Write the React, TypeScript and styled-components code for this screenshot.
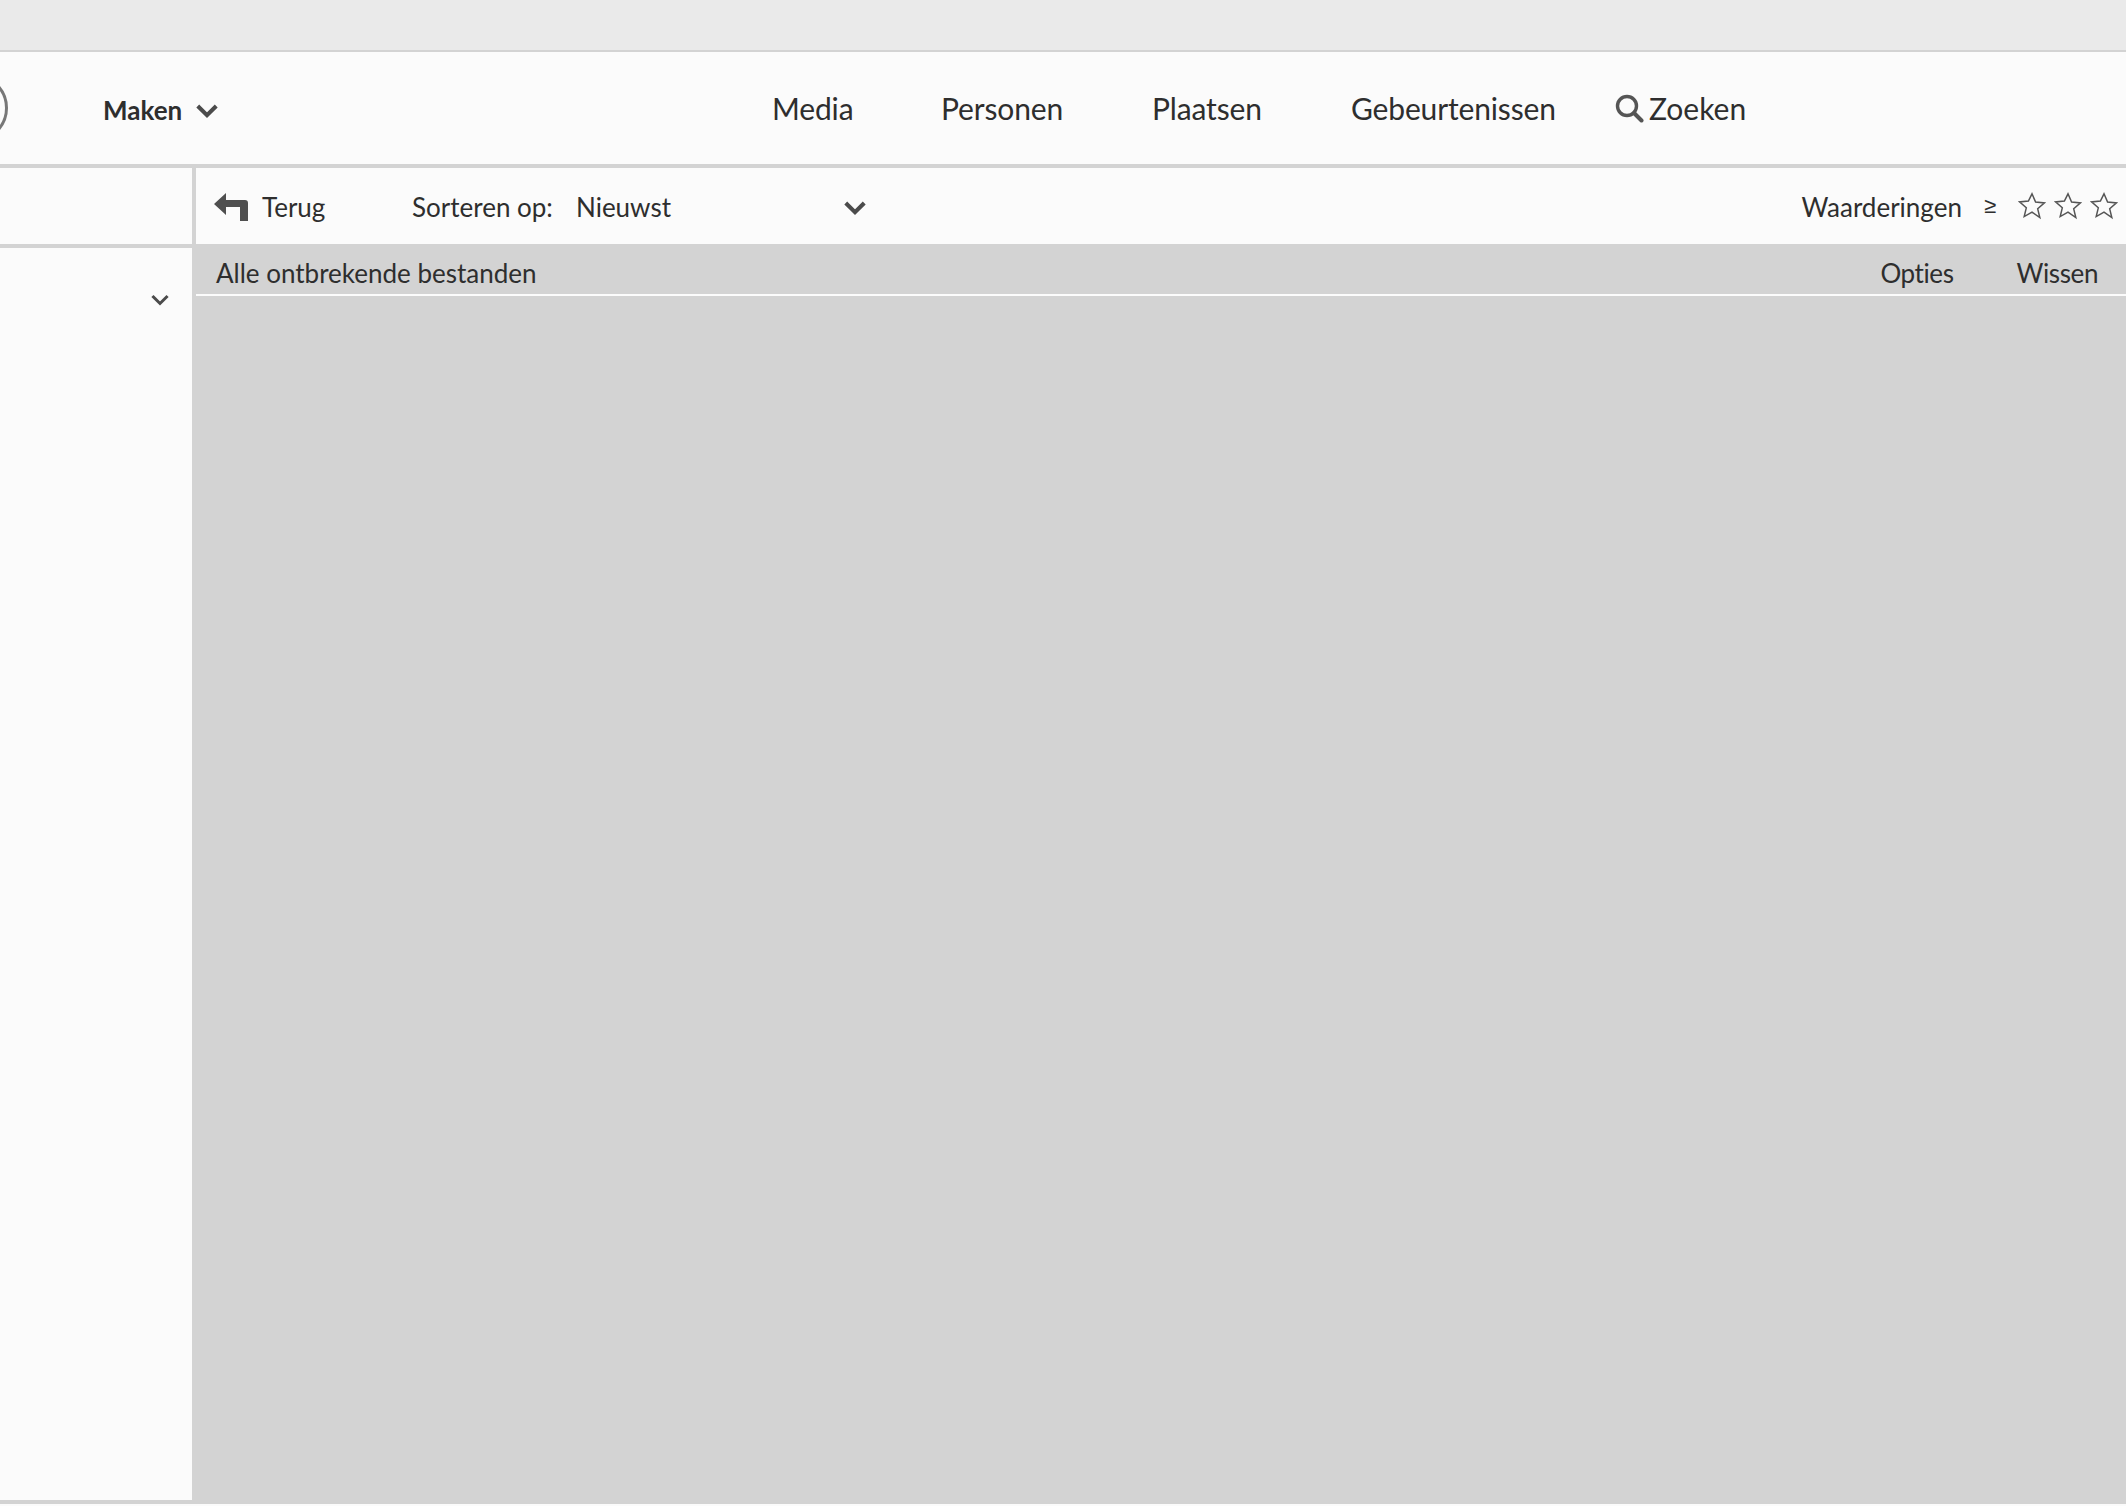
import React from "react";
import styled, { createGlobalStyle } from "styled-components";

const GlobalStyle = createGlobalStyle`
  html, body {
    margin: 0;
    padding: 0;
    background: #fbfbfb;
    font-family: "Lato", "Noto Sans", sans-serif;
    color: #2e2e2e;
  }
`;

const Page = styled.div`
  width: 2126px;
  height: 1506px;
  display: flex;
  flex-direction: column;
  overflow: hidden;
`;

const TitleStrip = styled.div`
  height: 50px;
  flex: none;
  background: #eaeaea;
  border-bottom: 2px solid #d3d3d3;
`;

const Header = styled.header`
  height: 112px;
  flex: none;
  display: flex;
  align-items: center;
  background: #fbfbfb;
  border-bottom: 4px solid #d3d3d3;
`;

const Logo = styled.svg`
  width: 8px;
  height: 52px;
  flex: none;
  margin-right: 95px;
`;

const CreateButton = styled.div`
  display: flex;
  align-items: center;
  gap: 13px;
  font-size: 26px;
  font-weight: 700;
  width: 669px;
  padding-top: 3px;
`;

const NavItem = styled.div<{ $width: number }>`
  width: ${(p) => p.$width}px;
  font-size: 30px;
  line-height: 40px;
  letter-spacing: -0.15px;
  flex: none;
`;

const SearchItem = styled.div`
  display: flex;
  align-items: center;
  gap: 5px;
  font-size: 30px;
  line-height: 40px;
`;

const Body = styled.div`
  flex: 1;
  display: grid;
  grid-template-columns: 192px 1fr;
  grid-template-rows: 76px 1fr;
  min-height: 0;
`;

const SideTop = styled.div`
  background: #fbfbfb;
`;

const Toolbar = styled.div`
  display: flex;
  align-items: center;
  padding: 2px 0 0 18px;
  background: #fbfbfb;
  font-size: 26px;
  border-left: 4px solid #d3d3d3;
`;

const BackButton = styled.div`
  display: flex;
  align-items: center;
  gap: 14px;
  width: 198px;
  flex: none;
`;

const SortLabel = styled.span`
  width: 164px;
  flex: none;
`;

const SortValue = styled.span`
  width: 267px;
  flex: none;
`;

const Ratings = styled.div`
  margin-left: auto;
  display: flex;
  align-items: center;
`;

const RatingLabel = styled.span`
  margin-right: 22px;
`;

const AtLeast = styled.span`
  margin-right: 22px;
  font-family: "Noto Sans", sans-serif;
  font-size: 22px;
  position: relative;
  top: -3px;
`;

const Stars = styled.div`
  display: flex;
  gap: 8px;
  margin-right: 8px;
  position: relative;
  top: -1px;
`;

const Sidebar = styled.aside`
  background: #fbfbfb;
  border-top: 4px solid #d3d3d3;
  border-bottom: 4px solid #d3d3d3;
  margin-bottom: 2px;
  display: flex;
  justify-content: flex-end;
  padding: 42px 22px 0 0;
  align-items: flex-start;
`;

const Content = styled.main`
  background: #d3d3d3;
  margin-bottom: 2px;
`;

const FilterBar = styled.div`
  box-sizing: border-box;
  height: 52px;
  margin-left: 4px;
  padding: 7px 28px 0 20px;
  display: flex;
  align-items: center;
  border-bottom: 2px solid #fbfbfb;
  font-size: 26px;
`;

const FilterTitle = styled.span`
  margin-right: auto;
`;

const FilterAction = styled.span`
  margin-left: 63px;
  letter-spacing: -0.4px;
`;

const Chevron = ({ size, weight, drop = 0 }: { size: number; weight: number; drop?: number }) => (
  <svg width={size} height={size} viewBox="0 0 20 20" fill="none" style={{ marginTop: drop }}>
    <path d="M3.5 7l6.5 6.5L16.5 7" stroke="#4b4b4b" strokeWidth={weight} strokeLinecap="square" />
  </svg>
);

const Star = () => (
  <svg width="28" height="28" viewBox="0 0 28 28" fill="none">
    <path
      d="M14 1.8l3.6 8.3 8.9.8-6.8 5.9 2.1 8.8L14 20.1l-7.8 4.5 2.1-8.8-6.8-5.9 8.9-.8z"
      stroke="#555"
      strokeWidth="1.5"
      strokeLinejoin="miter"
    />
  </svg>
);

export default function App() {
  return (
    <Page>
      <GlobalStyle />
      <TitleStrip />
      <Header>
        <Logo viewBox="0 0 8 52" fill="none">
          <circle cx="-26" cy="26" r="32.5" stroke="#777" strokeWidth="3" />
        </Logo>
        <CreateButton>
          Maken
          <Chevron size={24} weight={3.4} drop={2} />
        </CreateButton>
        <NavItem $width={169}>Media</NavItem>
        <NavItem $width={211}>Personen</NavItem>
        <NavItem $width={199}>Plaatsen</NavItem>
        <NavItem $width={264}>Gebeurtenissen</NavItem>
        <SearchItem>
          <svg width="29" height="29" viewBox="0 0 29 29" fill="none">
            <circle cx="12" cy="12" r="9.5" stroke="#555" strokeWidth="3.4" />
            <path d="M19 19l7.5 7.5" stroke="#555" strokeWidth="4" strokeLinecap="round" />
          </svg>
          Zoeken
        </SearchItem>
      </Header>
      <Body>
        <SideTop />
        <Toolbar>
          <BackButton>
            <svg width="34" height="28" viewBox="0 0 34 28" fill="#4f4f4f">
              <path d="M0 11L12 0v7h19a3 3 0 0 1 3 3v18h-8V14H12v8z" />
            </svg>
            Terug
          </BackButton>
          <SortLabel>Sorteren op:</SortLabel>
          <SortValue>Nieuwst</SortValue>
          <Chevron size={24} weight={3.4} drop={1} />
          <Ratings>
            <RatingLabel>Waarderingen</RatingLabel>
            <AtLeast>≥</AtLeast>
            <Stars>
              <Star />
              <Star />
              <Star />
            </Stars>
          </Ratings>
        </Toolbar>
        <Sidebar>
          <Chevron size={20} weight={3} />
        </Sidebar>
        <Content>
          <FilterBar>
            <FilterTitle>Alle ontbrekende bestanden</FilterTitle>
            <FilterAction>Opties</FilterAction>
            <FilterAction>Wissen</FilterAction>
          </FilterBar>
        </Content>
      </Body>
    </Page>
  );
}
